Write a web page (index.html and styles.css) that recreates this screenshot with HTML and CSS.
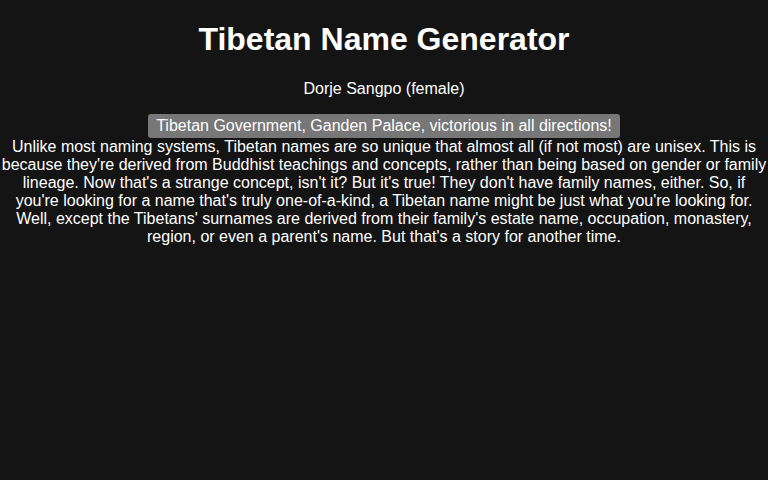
FILE: index.html
```html
<!DOCTYPE html>
<html lang="en">
<head>
    <meta charset="UTF-8">
    <meta name="viewport" content="width=device-width, initial-scale=1.0">
    <title>Tibetan Name Generator</title>
    <link rel="stylesheet" href="styles.css">
</head>
<body>
    <h1 class="title">Tibetan Name Generator</h1>
    <p class="name">Dorje Sangpo (female)</p>
    <button class="meaning">Tibetan Government, Ganden Palace, victorious in all directions!</button>
    <div class="about">Unlike most naming systems, Tibetan names are so unique that almost all (if not most) are unisex. This is because they're derived from Buddhist teachings and concepts, rather than being based on gender or family lineage. Now that's a strange concept, isn't it? But it's true! They don't have family names, either. So, if you're looking for a name that's truly one-of-a-kind, a Tibetan name might be just what you're looking for. Well, except the Tibetans' surnames are derived from their family's estate name, occupation, monastery, region, or even a parent's name. But that's a story for another time.</div>
</body>
</html>
```

FILE: styles.css
```css
body {
    background-color: #141414;
    color: #ffffff;
    font-family: "Liberation Sans", Arial, sans-serif;
    font-size: 16px;
    line-height: 18px;
    margin: 0;
    padding: 0;
    text-align: center;
}

.title {
    font-size: 32px;
    line-height: 37px;
    margin: 21px 0 22px;
}

.name {
    margin: 16px 0;
}

.meaning {
    background-color: #777777;
    color: #ffffff;
    font-family: inherit;
    font-size: 16px;
    line-height: 18px;
    border: none;
    border-radius: 3px;
    padding: 3px 8px;
    margin: 0;
    cursor: pointer;
}
```
